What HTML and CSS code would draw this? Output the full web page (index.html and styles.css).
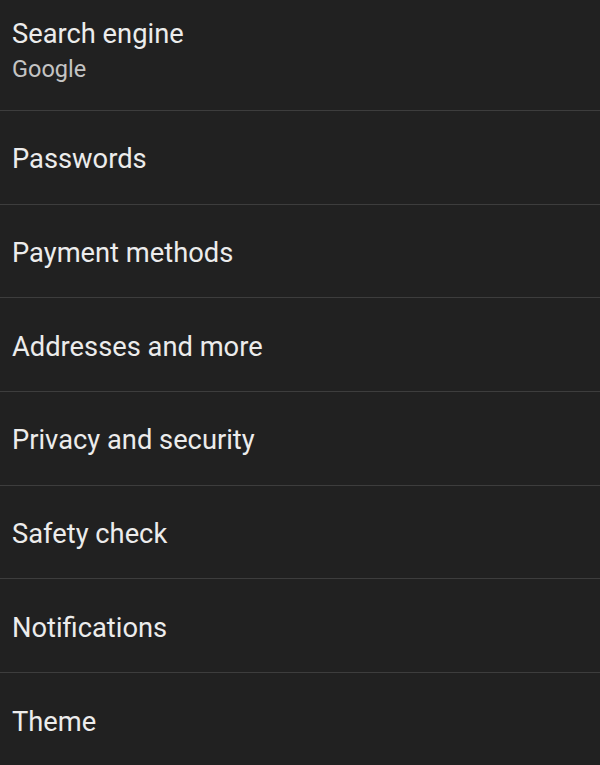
FILE: index.html
```html
<!DOCTYPE html>
<html>
<head>
<meta charset="utf-8">
<link rel="stylesheet" href="styles.css">
</head>
<body>
<ul class="settings">
  <li class="item item-first">
    <span class="title">Search engine</span>
    <span class="summary">Google</span>
  </li>
  <li class="item"><span class="title">Passwords</span></li>
  <li class="item"><span class="title">Payment methods</span></li>
  <li class="item"><span class="title">Addresses and more</span></li>
  <li class="item"><span class="title">Privacy and security</span></li>
  <li class="item"><span class="title">Safety check</span></li>
  <li class="item"><span class="title">Notifications</span></li>
  <li class="item item-last"><span class="title">Theme</span></li>
</ul>
</body>
</html>
```
FILE: styles.css
```css
html, body {
  margin: 0;
  padding: 0;
  background: #212121;
}
body {
  width: 600px;
  height: 765px;
  overflow: hidden;
  font-family: Roboto, "Noto Sans", sans-serif;
}
.settings {
  list-style: none;
  margin: 0;
  padding: 0;
}
.item {
  display: flex;
  flex-direction: column;
  justify-content: center;
  box-sizing: border-box;
  height: 93.67px;
  padding: 4px 12px 0;
  border-bottom: 1px solid #3d3d3d;
}
.item-first {
  height: 111px;
  justify-content: flex-start;
  padding-top: 16px;
}
.item-last {
  border-bottom: none;
}
.title {
  color: #ececec;
  font-size: 27.3px;
  line-height: 36px;
}
.summary {
  color: #c4c4c4;
  font-size: 23.5px;
  line-height: 32px;
  margin-top: 1px;
}
```
